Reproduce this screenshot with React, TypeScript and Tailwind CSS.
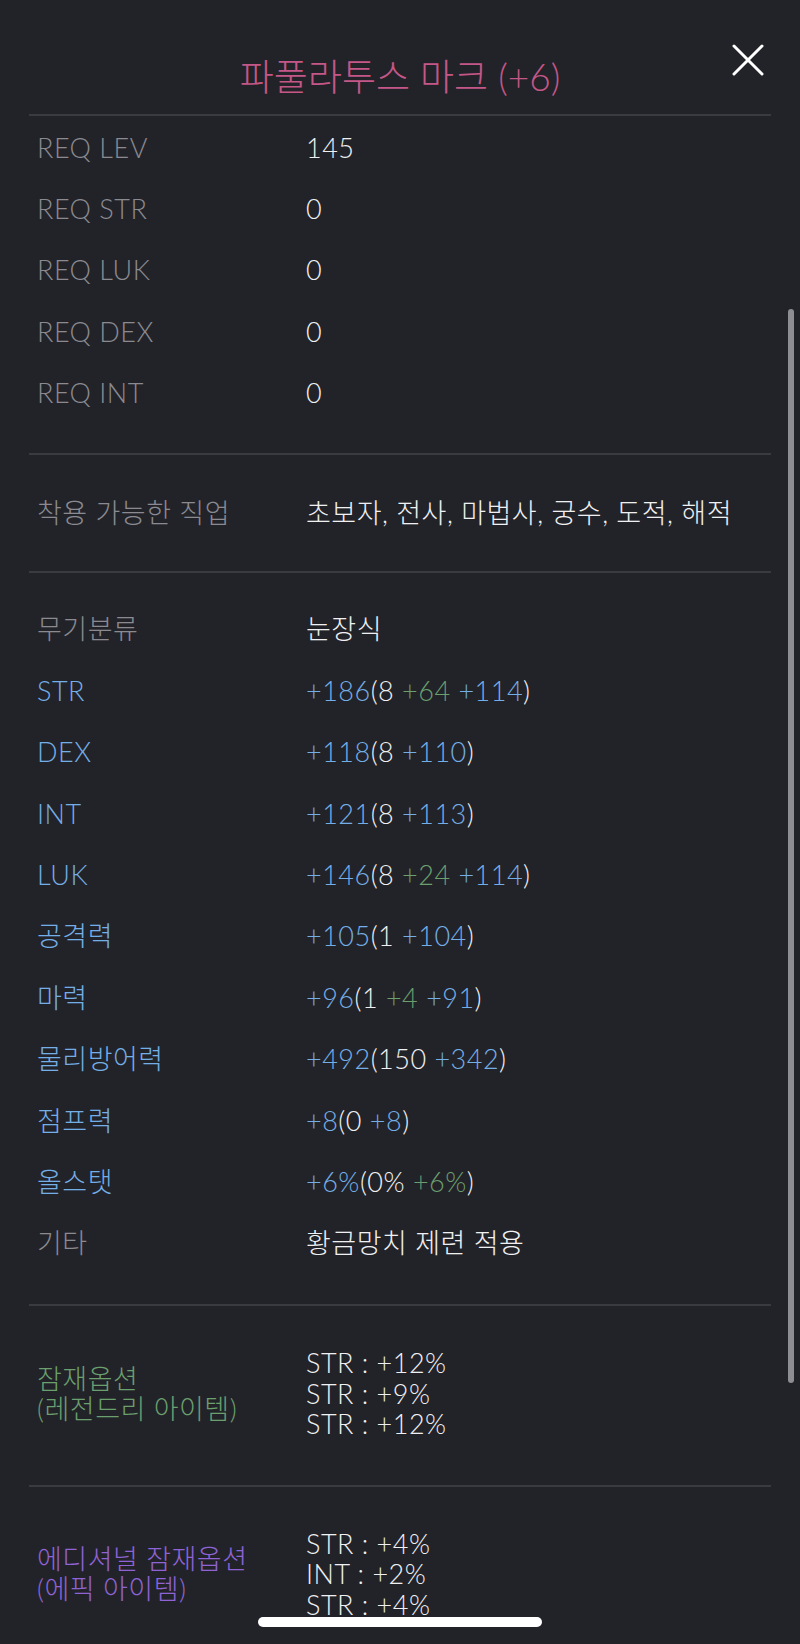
import type { ReactNode } from "react";

type Tone = "b" | "g" | "w";
type Seg = [string, Tone];

const toneClass: Record<Tone, string> = {
  b: "text-[#74aee6]",
  g: "text-[#6b9f6e]",
  w: "text-[#f0f0f2]",
};

const reqRows: [string, string][] = [
  ["REQ LEV", "145"],
  ["REQ STR", "0"],
  ["REQ LUK", "0"],
  ["REQ DEX", "0"],
  ["REQ INT", "0"],
];

const statRows: { label: string; blue: boolean; value: Seg[] }[] = [
  { label: "무기분류", blue: false, value: [["눈장식", "w"]] },
  { label: "STR", blue: true, value: [["+186", "b"], ["(8 ", "w"], ["+64", "g"], [" ", "w"], ["+114", "b"], [")", "w"]] },
  { label: "DEX", blue: true, value: [["+118", "b"], ["(8 ", "w"], ["+110", "b"], [")", "w"]] },
  { label: "INT", blue: true, value: [["+121", "b"], ["(8 ", "w"], ["+113", "b"], [")", "w"]] },
  { label: "LUK", blue: true, value: [["+146", "b"], ["(8 ", "w"], ["+24", "g"], [" ", "w"], ["+114", "b"], [")", "w"]] },
  { label: "공격력", blue: true, value: [["+105", "b"], ["(1 ", "w"], ["+104", "b"], [")", "w"]] },
  { label: "마력", blue: true, value: [["+96", "b"], ["(1 ", "w"], ["+4", "g"], [" ", "w"], ["+91", "b"], [")", "w"]] },
  { label: "물리방어력", blue: true, value: [["+492", "b"], ["(150 ", "w"], ["+342", "b"], [")", "w"]] },
  { label: "점프력", blue: true, value: [["+8", "b"], ["(0 ", "w"], ["+8", "b"], [")", "w"]] },
  { label: "올스탯", blue: true, value: [["+6%", "b"], ["(0% ", "w"], ["+6%", "g"], [")", "w"]] },
  { label: "기타", blue: false, value: [["황금망치 제련 적용", "w"]] },
];

function Row({ label, labelClass, height, children }: { label: string; labelClass: string; height: string; children: ReactNode }) {
  return (
    <div className={`flex items-center px-[8px] ${height}`}>
      <div className={`w-[269px] shrink-0 ${labelClass}`}>{label}</div>
      <div className="whitespace-pre">{children}</div>
    </div>
  );
}

function CloseIcon() {
  return (
    <svg width="32" height="32" viewBox="0 0 32 32" fill="none" aria-hidden="true">
      <path d="M2 2 L30 30 M30 2 L2 30" stroke="#ffffff" strokeWidth="3" strokeLinecap="round" />
    </svg>
  );
}

export default function App() {
  return (
    <div className="relative h-[1644px] w-full overflow-hidden bg-[#222329] text-[27px] leading-[36px] font-light tracking-[0.5px] text-[#f0f0f2] [font-family:Lato,'Noto_Sans_CJK_KR',sans-serif]">
      <header className="relative flex h-[114px] justify-center pt-[54px]">
        <h1 className="text-[37px] leading-[46px] tracking-normal text-[#c45787]">파풀라투스 마크 (+6)</h1>
        <button className="absolute right-[36px] top-[44px]" aria-label="닫기">
          <CloseIcon />
        </button>
      </header>

      <div className="mx-[29px]">
        <section className="border-t-2 border-[#3a3b41] pt-[1px] pb-[30px]">
          {reqRows.map(([label, value]) => (
            <Row key={label} label={label} labelClass="text-[#8a8a90]" height="h-[61.3px]">
              {value}
            </Row>
          ))}
        </section>

        <section className="border-t-2 border-[#3a3b41] pt-[27px] pb-[27px]">
          <Row label="착용 가능한 직업" labelClass="text-[#8a8a90]" height="h-[61.3px]">
            초보자, 전사, 마법사, 궁수, 도적, 해적
          </Row>
        </section>

        <section className="border-t-2 border-[#3a3b41] pt-[26px] pb-[30px]">
          {statRows.map((r) => (
            <Row
              key={r.label}
              label={r.label}
              labelClass={r.blue ? "text-[#74aee6]" : "text-[#8a8a90]"}
              height="h-[61.4px]"
            >
              {r.value.map(([t, tone], i) => (
                <span key={i} className={toneClass[tone]}>
                  {t}
                </span>
              ))}
            </Row>
          ))}
        </section>

        <section className="flex items-center border-t-2 border-[#3a3b41] px-[8px] pt-[42px] pb-[45px]">
          <div className="w-[269px] shrink-0 leading-[30px] text-[#6b9f6e]">
            <div>잠재옵션</div>
            <div>(레전드리 아이템)</div>
          </div>
          <div className="leading-[30.5px]">
            <div>STR : +12%</div>
            <div>STR : +9%</div>
            <div>STR : +12%</div>
          </div>
        </section>

        <section className="flex items-center border-t-2 border-[#3a3b41] px-[8px] pt-[42px] pb-[46px]">
          <div className="w-[269px] shrink-0 leading-[30px] text-[#8f63d6]">
            <div>에디셔널 잠재옵션</div>
            <div>(에픽 아이템)</div>
          </div>
          <div className="leading-[30.5px]">
            <div>STR : +4%</div>
            <div>INT : +2%</div>
            <div>STR : +4%</div>
          </div>
        </section>
      </div>

      <div className="absolute right-[6px] top-[309px] h-[1074px] w-[6px] rounded-full bg-[#8d8d92]" />
      <div className="absolute bottom-[17px] left-1/2 h-[10px] w-[284px] -translate-x-1/2 rounded-full bg-white" />
    </div>
  );
}
